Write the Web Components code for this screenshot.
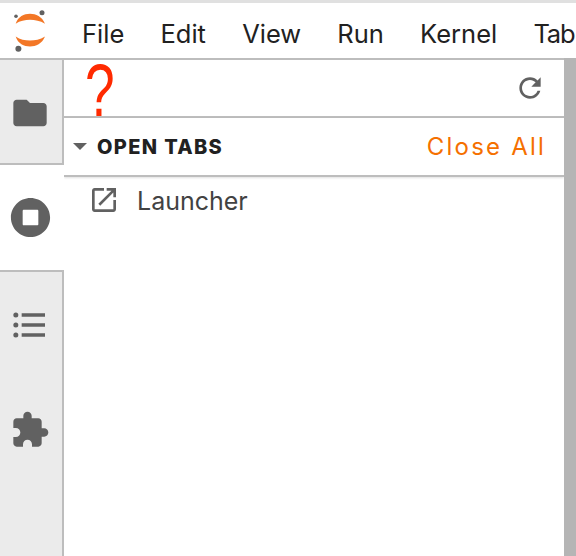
<!DOCTYPE html>
<html>
<head>
<meta charset="utf-8">
<style>
  html, body { margin: 0; height: 100%; overflow: hidden; background: #fff; }
  body { font-family: Inter, "Noto Sans", sans-serif; color: #212121; }
</style>
</head>
<body>
<lab-shell>
  <lab-menubar slot="top">
    <span>File</span><span>Edit</span><span>View</span><span>Run</span><span>Kernel</span><span>Tab</span>
  </lab-menubar>
  <lab-sidebar slot="side">
    <lab-sidetab icon="folder"></lab-sidetab>
    <lab-sidetab icon="stop" active></lab-sidetab>
    <lab-sidetab icon="list"></lab-sidetab>
    <lab-sidetab icon="puzzle"></lab-sidetab>
  </lab-sidebar>
  <running-panel slot="main">
    <tab-row>Launcher</tab-row>
  </running-panel>
</lab-shell>

<script>
const ICONS = {
  folder: `<path d="M10 4H4c-1.1 0-1.99.9-1.99 2L2 18c0 1.1.9 2 2 2h16c1.1 0 2-.9 2-2V8c0-1.1-.9-2-2-2h-8l-2-2z"/>`,
  stop: `<path fill-rule="evenodd" d="M12 2C6.48 2 2 6.48 2 12s4.48 10 10 10 10-4.48 10-10S17.52 2 12 2zM8.6 8h6.8c.33 0 .6.27.6.6v6.8c0 .33-.27.6-.6.6H8.6a.6.6 0 0 1-.6-.6V8.600c0-.33.27-.6.6-.6z"/>`,
  list: `<circle cx="3.500" cy="6" r="1.500"/><circle cx="3.500" cy="12" r="1.500"/><circle cx="3.500" cy="18" r="1.500"/><path d="M7 5h14v2H7zM7 11h14v2H7zM7 17h14v2H7z"/>`,
  puzzle: `<path d="M20.5 11H19V7c0-1.1-.9-2-2-2h-4V3.500C13 2.120 11.880 1 10.500 1S8 2.120 8 3.500V5H4c-1.100 0-1.990.9-1.990 2v3.800H3.500c1.490 0 2.700 1.210 2.700 2.700s-1.210 2.700-2.700 2.700H2V20c0 1.100.9 2 2 2h3.800v-1.500c0-1.490 1.210-2.700 2.700-2.700 1.490 0 2.700 1.210 2.700 2.700V22H17c1.100 0 2-.9 2-2v-4h1.500c1.380 0 2.500-1.120 2.500-2.500S21.880 11 20.500 11z"/>`,
  refresh: `<path d="M17.65 6.350C16.200 4.900 14.210 4 12 4c-4.420 0-7.990 3.580-7.990 8s3.570 8 7.990 8c3.730 0 6.840-2.550 7.730-6h-2.080c-.82 2.330-3.040 4-5.650 4-3.310 0-6-2.690-6-6s2.690-6 6-6c1.660 0 3.140.69 4.220 1.780L13 11h7V4l-2.350 2.350z"/>`,
  launch: `<path d="M19 19H5V5h7V3H5c-1.110 0-2 .9-2 2v14c0 1.100.89 2 2 2h14c1.100 0 2-.9 2-2v-7h-2v7zM14 3v2h3.590l-9.830 9.830 1.410 1.410L19 6.410V10h2V3h-7z"/>`,
  caret: `<path d="M5 8h14l-7 7z"/>`
};

class LabIcon extends HTMLElement {
  connectedCallback() {
    const size = this.getAttribute("size") || 24;
    const root = this.shadowRoot || this.attachShadow({ mode: "open" });
    root.innerHTML = `
      <style>:host { display: block; width: ${size}px; height: ${size}px; } svg { display: block; fill: #616161; }</style>
      <svg width="${size}" height="${size}" viewBox="0 0 24 24">${ICONS[this.getAttribute("name")]}</svg>`;
  }
}

class LabShell extends HTMLElement {
  constructor() {
    super();
    this.attachShadow({ mode: "open" }).innerHTML = `
      <style>
        :host { display: grid; grid-template-columns: 64px 1fr 12px; grid-template-rows: 58px 1fr; width: 576px; height: 556px; overflow: hidden; }
        .top { grid-column: 1 / 4; }
        .bar { background: #b5b5b5; }
      </style>
      <div class="top"><slot name="top"></slot></div>
      <slot name="side"></slot>
      <slot name="main"></slot>
      <div class="bar"></div>`;
  }
}

class LabMenubar extends HTMLElement {
  constructor() {
    super();
    this.attachShadow({ mode: "open" }).innerHTML = `
      <style>
        :host { display: flex; align-items: center; box-sizing: border-box; height: 58px; border-top: 3px solid #e0e0e0; overflow: hidden; background: #fff; }
        svg { flex: none; margin: 0 0 0 12px; overflow: visible; }
        .items { display: flex; gap: 36.2px; margin-left: 34px; font-size: 25.5px; line-height: 30px; padding-top: 7px; white-space: nowrap; }
        ::slotted(span:last-child) { letter-spacing: -1.200px; }
      </style>
      <svg width="36" height="42" viewBox="0 0 36 42">
        <path fill="#f37726" d="M3.700 13.800C6 6.500 12 3.800 18 3.800s12 2.700 15 10C28 10.800 23 9.800 18 9.800s-10 1-14.300 4z"/>
        <path fill="#f37726" d="M3.700 26.500C6 33.800 12 36.500 18 36.500s12-2.700 15-10C28 29.800 23 30.500 18 30.500s-10-.7-14.300-4z"/>
        <circle fill="#616161" cx="4" cy="6.200" r="1.800"/>
        <circle fill="#616161" cx="30" cy="2.800" r="2.500"/>
        <circle fill="#616161" cx="6.400" cy="38.800" r="3"/>
      </svg>
      <div class="items"><slot></slot></div>`;
  }
}

class LabSidebar extends HTMLElement {
  constructor() {
    super();
    this.attachShadow({ mode: "open" }).innerHTML = `
      <style>
        :host { display: flex; flex-direction: column; width: 64px; background: #ebebeb; border-top: 2px solid #bdbdbd; box-sizing: border-box; position: relative; }
        .rest { flex: 1; border-right: 2px solid #bdbdbd; }
      </style>
      <slot></slot>
      <div class="rest"></div>`;
  }
}

class LabSidetab extends HTMLElement {
  connectedCallback() {
    const active = this.hasAttribute("active");
    const size = this.getAttribute("icon") === "stop" ? 47 : 40;
    const root = this.shadowRoot || this.attachShadow({ mode: "open" });
    root.innerHTML = `
      <style>
        :host { display: flex; align-items: center; justify-content: center; box-sizing: border-box; width: 64px; height: 105px; flex: none;
          ${active ? "padding-right: 4px; background: #fff; border-top: 2px solid #bdbdbd; border-bottom: 2px solid #bdbdbd; height: 109px; margin-top: -2px;" : "padding-right: 2px; border-right: 2px solid #bdbdbd;"} }
      </style>
      <lab-icon name="${this.getAttribute("icon")}" size="${size}"></lab-icon>`;
  }
}

class RunningPanel extends HTMLElement {
  constructor() {
    super();
    this.attachShadow({ mode: "open" }).innerHTML = `
      <style>
        :host { display: block; background: #fff; border-top: 2px solid #bdbdbd; }
        .toolbar { display: flex; align-items: center; justify-content: space-between; box-sizing: border-box; height: 58px; padding: 0 18px 0 0; border-bottom: 2px solid #bdbdbd; }
        .mark { color: #ff2a00; font-family: "Liberation Sans", sans-serif; font-size: 74px; line-height: 56px; margin: 5px 0 0 21px; transform: scaleX(.72); transform-origin: left center; }
        .head { display: flex; align-items: center; box-sizing: border-box; height: 59px; padding: 0 18px 0 4px; border-bottom: 2px solid #bdbdbd; box-shadow: 0 1px 2px rgba(0,0,0,.12); }
        .title { font-size: 20px; font-weight: 800; letter-spacing: 1.350px; margin-left: 5px; }
        .close { margin-left: auto; color: #f57000; font-size: 24px; letter-spacing: 2.200px; }
      </style>
      <div class="toolbar"><span class="mark">?</span><lab-icon name="refresh" size="32"></lab-icon></div>
      <div class="head"><lab-icon name="caret" size="24"></lab-icon><span class="title">OPEN TABS</span><span class="close">Close All</span></div>
      <slot></slot>`;
  }
}

class TabRow extends HTMLElement {
  constructor() {
    super();
    this.attachShadow({ mode: "open" }).innerHTML = `
      <style>
        :host { display: flex; align-items: center; gap: 17px; height: 48px; padding-left: 24px; font-size: 25px; color: #424242; }
        lab-icon { margin-top: -2px; }
      </style>
      <lab-icon name="launch" size="32"></lab-icon><slot></slot>`;
  }
}

customElements.define("lab-icon", LabIcon);
customElements.define("lab-shell", LabShell);
customElements.define("lab-menubar", LabMenubar);
customElements.define("lab-sidebar", LabSidebar);
customElements.define("lab-sidetab", LabSidetab);
customElements.define("running-panel", RunningPanel);
customElements.define("tab-row", TabRow);
</script>
</body>
</html>
